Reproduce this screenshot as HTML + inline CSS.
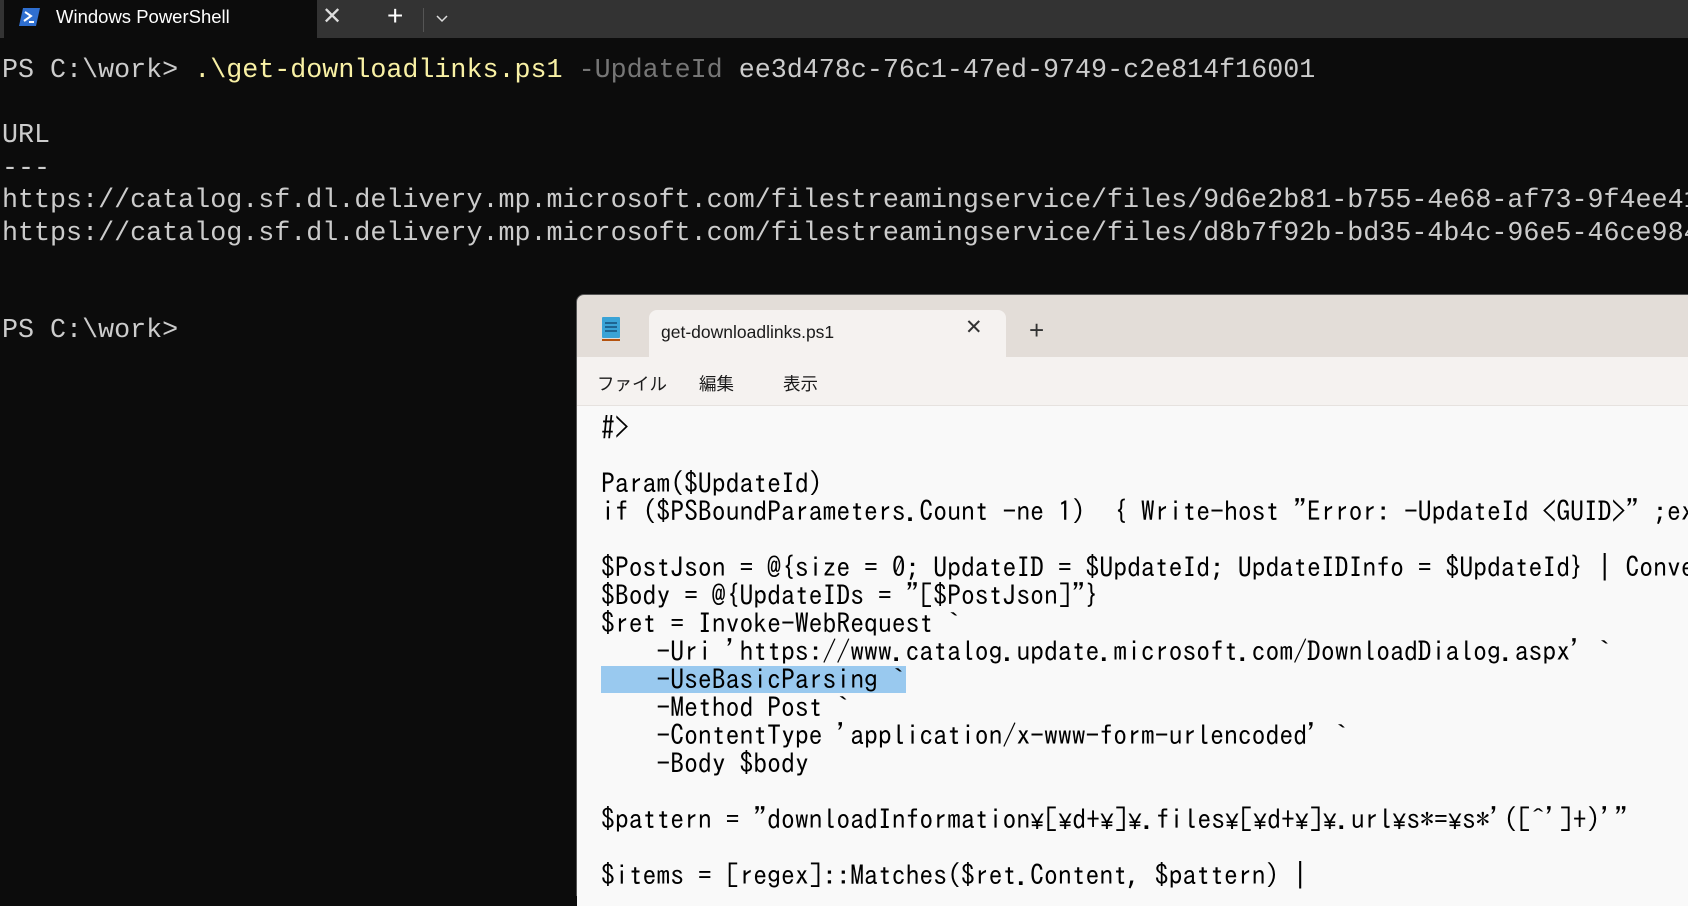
<!DOCTYPE html>
<html><head><meta charset="utf-8"><style>
body{margin:0;width:1688px;height:872px;background:#0c0c0c;overflow:hidden;position:relative;font-family:"Liberation Sans",sans-serif}
.bar{position:absolute;left:0;top:0;width:1688px;height:38px;background:#333}
.tab{position:absolute;left:4px;top:0;width:313px;height:38px;background:#0c0c0c}
.term{position:absolute;left:2px;top:55px;font-family:"Liberation Mono",monospace;font-size:26.7px;color:#cccccc;white-space:pre;line-height:32.5px}
.y{color:#f9f1a5}.g{color:#767676}
.np{position:absolute;left:576px;top:294px;width:1120px;height:600px;background:#e3ddd8;border-radius:8px 0 0 0;border:1px solid #555}
.ntab{position:absolute;left:72px;top:15px;width:357px;height:47px;background:#f5f2f0;border-radius:8px 8px 0 0}
.menu{position:absolute;left:0;top:62px;width:100%;height:48px;background:#f5f2f0;border-bottom:1px solid #e6e2df}
.menu span{position:absolute;top:14px;font-family:"Liberation Sans","Noto Sans CJK JP",sans-serif;font-size:17.5px;color:#1a1a1a}
.edit{position:absolute;left:0;top:111px;width:100%;height:500px;background:#f9f9f9;overflow:hidden}
.code{position:absolute;left:24px;top:8px;font-family:"IPAGothic","Noto Sans CJK JP",monospace;font-size:27.7px;line-height:28px;white-space:pre;color:#000}
.yen{font-family:"Liberation Mono",monospace;font-size:23.5px;line-height:0}
.hl{background:#99c9ef}
</style></head><body>
<div class="bar"></div>
<div class="tab"></div>
<svg style="position:absolute;left:18px;top:6px" width="24" height="22" viewBox="0 0 22 22"><path d="M4 2h17l-4 18H0z" fill="#2f6fd0"/><path d="M6 6l6 4-7 5" stroke="#fff" stroke-width="2" fill="none"/><path d="M10 16h5" stroke="#fff" stroke-width="2"/></svg>
<div style="position:absolute;left:56px;top:6px;color:#fff;font-size:18.5px">Windows PowerShell</div>
<div style="position:absolute;left:322px;top:2px;color:#ddd;font-size:24px;font-weight:200">✕</div>
<div style="position:absolute;left:387px;top:0px;color:#fff;font-size:28px">+</div>
<div style="position:absolute;left:423px;top:8px;width:1px;height:24px;background:#555"></div>
<svg style="position:absolute;left:434px;top:10px" width="16" height="16"><path d="M3 6l5 5 5-5" stroke="#ddd" stroke-width="1.5" fill="none"/></svg>
<div class="term">PS C:\work&gt; <span class="y">.\get-downloadlinks.ps1</span> <span class="g">-UpdateId</span> ee3d478c-76c1-47ed-9749-c2e814f16001

URL
---
https://catalog.sf.dl.delivery.mp.microsoft.com/filestreamingservice/files/9d6e2b81-b755-4e68-af73-9f4ee41
https://catalog.sf.dl.delivery.mp.microsoft.com/filestreamingservice/files/d8b7f92b-bd35-4b4c-96e5-46ce984


PS C:\work&gt;</div>
<div class="np">
<svg style="position:absolute;left:23px;top:19px" width="22" height="30"><rect x="2" y="3" width="18" height="21" rx="1" fill="#3aa3d6"/><path d="M5 9h12M5 13h12M5 17h12" stroke="#14507a" stroke-width="1.5"/><path d="M2 26h18" stroke="#b5530f" stroke-width="2"/></svg>
<div class="ntab"></div>
<div style="position:absolute;left:84px;top:27px;font-size:17.5px;color:#1a1a1a">get-downloadlinks.ps1</div>
<div style="position:absolute;left:388px;top:20px;font-size:21px;color:#333">✕</div>
<div style="position:absolute;left:452px;top:20px;font-size:26px;color:#333;font-weight:300">+</div>
<div class="menu"><span style="left:20px">ファイル</span><span style="left:122px">編集</span><span style="left:206px">表示</span></div>
<div class="edit"><div class="code">#&gt;

Param($UpdateId)
if ($PSBoundParameters.Count -ne 1)  { Write-host "Error: -UpdateId &lt;GUID&gt;" ;exit }

$PostJson = @{size = 0; UpdateID = $UpdateId; UpdateIDInfo = $UpdateId} | ConvertTo-Json
$Body = @{UpdateIDs = "[$PostJson]"}
$ret = Invoke-WebRequest `
    -Uri 'https://www.catalog.update.microsoft.com/DownloadDialog.aspx' `
<span class="hl">    -UseBasicParsing `</span>
    -Method Post `
    -ContentType 'application/x-www-form-urlencoded' `
    -Body $body

$pattern = "downloadInformation<span class="yen">¥</span>[<span class="yen">¥</span>d+<span class="yen">¥</span>]<span class="yen">¥</span>.files<span class="yen">¥</span>[<span class="yen">¥</span>d+<span class="yen">¥</span>]<span class="yen">¥</span>.url<span class="yen">¥</span>s*=<span class="yen">¥</span>s*'([^']+)'"

$items = [regex]::Matches($ret.Content, $pattern) |</div></div>
</div>
</body></html>
